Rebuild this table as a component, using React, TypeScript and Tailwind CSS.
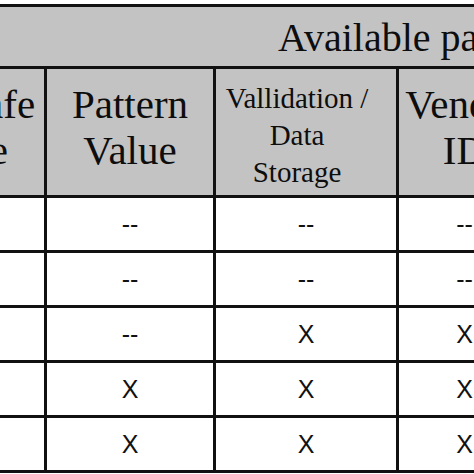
import React from "react";

const serif = "font-['Liberation_Serif','Times_New_Roman',serif]";
const sans = "font-['Liberation_Sans',Arial,sans-serif]";

const rows: string[][] = [
  ["", "--", "--", "--", ""],
  ["", "--", "--", "--", ""],
  ["", "--", "X", "X", ""],
  ["", "X", "X", "X", ""],
  ["", "X", "X", "X", ""],
];

export default function App() {
  return (
    <div className="w-[474px] h-[474px] overflow-hidden bg-white pt-[4px]">
      <div className="ml-[-106px] w-max grid grid-cols-[150px_166px_180px_131px_200px] grid-rows-[59px_126px_52px_52px_52px_52px_52px] gap-[3px] bg-[#111] py-[3px]">
        <div className={`col-span-5 bg-[#c3c3c3] flex items-center pl-[384px] pt-[2px] ${serif} text-[40px] leading-none text-[#0d0d0d] whitespace-nowrap`}>
          Available parameters
        </div>
        <div className={`bg-[#c3c3c3] flex flex-col items-center justify-center pb-[10px] pr-[18px] ${serif} text-[41px] leading-[46px] text-[#0d0d0d] whitespace-nowrap`}>
          <span>Fail-Safe</span>
          <span>Mode</span>
        </div>
        <div className={`bg-[#c3c3c3] flex flex-col items-center justify-center pb-[10px] ${serif} text-[41px] leading-[46px] text-[#0d0d0d] whitespace-nowrap`}>
          <span>Pattern</span>
          <span>Value</span>
        </div>
        <div className={`bg-[#c3c3c3] flex flex-col items-center justify-center pr-[18px] pt-[6px] ${serif} text-[29px] leading-[37px] text-[#0d0d0d] whitespace-nowrap`}>
          <span>Vallidation /</span>
          <span>Data</span>
          <span>Storage</span>
        </div>
        <div className={`bg-[#c3c3c3] flex flex-col items-center justify-center pb-[10px] ${serif} text-[41px] leading-[46px] text-[#0d0d0d] whitespace-nowrap`}>
          <span>Vendor</span>
          <span>ID</span>
        </div>
        <div className={`bg-[#c3c3c3] flex flex-col items-center justify-center pb-[10px] ${serif} text-[41px] leading-[46px] text-[#0d0d0d] whitespace-nowrap`}>
          <span>Other</span>
        </div>
        {rows.map((r, i) =>
          r.map((c, j) => (
            <div
              key={`${i}-${j}`}
              className={`bg-white flex items-center justify-center ${sans} text-[25px] leading-none text-[#111]`}
            >
              {c}
            </div>
          ))
        )}
      </div>
    </div>
  );
}
